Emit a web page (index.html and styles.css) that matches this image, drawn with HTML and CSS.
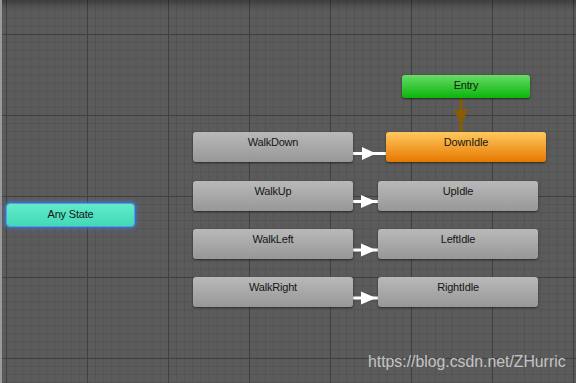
FILE: index.html
```html
<!DOCTYPE html>
<html lang="en">
<head>
    <meta charset="UTF-8">
    <meta name="viewport" content="width=device-width, initial-scale=1.0">
    <title>Animator</title>
    <link rel="stylesheet" href="styles.css">
</head>
<body>
    <div class="graph">
        <svg class="links" width="576" height="383" viewBox="0 0 576 383">
            <!-- Entry -> DownIdle -->
            <line x1="461" y1="97" x2="461" y2="132" stroke="#8a5c02" stroke-width="3"/>
            <polygon points="454,110 468,110 461,124" fill="#8a5c02"/>
            <!-- WalkDown -> DownIdle -->
            <line x1="352" y1="153.5" x2="387" y2="153.5" stroke="#fff" stroke-width="3"/>
            <polygon points="362,147 376,153.5 362,160" fill="#fff"/>
            <!-- WalkUp -> UpIdle -->
            <line x1="352" y1="201.5" x2="379" y2="201.5" stroke="#fff" stroke-width="3"/>
            <polygon points="361,195 376,201.5 361,208" fill="#fff"/>
            <!-- WalkLeft -> LeftIdle -->
            <line x1="352" y1="250" x2="379" y2="250" stroke="#fff" stroke-width="3"/>
            <polygon points="361,243.5 376,250 361,256.5" fill="#fff"/>
            <!-- WalkRight -> RightIdle -->
            <line x1="352" y1="298" x2="379" y2="298" stroke="#fff" stroke-width="3"/>
            <polygon points="361,291.5 376,298 361,304.5" fill="#fff"/>
        </svg>

        <div class="node entry" style="left:402px; top:75px; width:128px;">Entry</div>
        <div class="node default" style="left:386px; top:132px; width:160px;">DownIdle</div>
        <div class="node any" style="left:7px; top:204px; width:127px;">Any State</div>

        <div class="node" style="left:193px; top:132px;">WalkDown</div>
        <div class="node" style="left:193px; top:181px;">WalkUp</div>
        <div class="node" style="left:193px; top:229px;">WalkLeft</div>
        <div class="node" style="left:193px; top:277px;">WalkRight</div>

        <div class="node" style="left:378px; top:181px;">UpIdle</div>
        <div class="node" style="left:378px; top:229px;">LeftIdle</div>
        <div class="node" style="left:378px; top:277px;">RightIdle</div>

        <div class="watermark">https://blog.csdn.net/ZHurric</div>
    </div>
</body>
</html>
```

FILE: styles.css
```css
body {
    margin: 0;
    padding: 0;
    background-color: #5a5a5a;
    font-family: "Liberation Sans", Arial, sans-serif;
}
.graph {
    position: relative;
    width: 576px;
    height: 383px;
    overflow: hidden;
    background-color: #5b5b5b;
    background-image:
        linear-gradient(to bottom, rgba(0, 0, 0, 0.3), rgba(0, 0, 0, 0) 10px),
        linear-gradient(90deg, #404040 1px, transparent 1px),
        linear-gradient(#404040 1px, transparent 1px),
        linear-gradient(90deg, #535353 1px, transparent 1px),
        linear-gradient(#535353 1px, transparent 1px);
    background-size: 100% 100%, 81px 81px, 81px 81px, 8.1px 8.1px, 8.1px 8.1px;
    background-position: 0 0, 87px 0, 0 34px, 87px 0, 0 34px;
    background-repeat: no-repeat, repeat, repeat, repeat, repeat;
}
.graph::before {
    content: "";
    position: absolute;
    left: 0;
    top: 0;
    bottom: 0;
    width: 2px;
    background-color: #9a9a9a;
}
.links {
    position: absolute;
    left: 0;
    top: 0;
}
.node {
    position: absolute;
    box-sizing: border-box;
    width: 160px;
    height: 30px;
    padding-top: 4px;
    border-radius: 3px;
    background: linear-gradient(#b9b9b9, #979797);
    box-shadow: 0 1px 2px rgba(0, 0, 0, 0.55);
    color: #151515;
    font-size: 11px;
    line-height: 13px;
    letter-spacing: -0.2px;
    text-align: center;
}
.entry {
    height: 23px;
    background: linear-gradient(#66dc66, #0ab50a);
}
.default {
    background: linear-gradient(#ffc95e, #e67800);
}
.any {
    height: 22px;
    background: linear-gradient(#62ebcb, #42d9b6);
    box-shadow: 0 0 0 1px #4a9cff, 0 0 4px 2px rgba(60, 140, 255, 0.7);
}
.watermark {
    position: absolute;
    left: 368px;
    top: 353px;
    color: rgba(225, 225, 225, 0.8);
    font-size: 15.8px;
    line-height: 18px;
}
```
